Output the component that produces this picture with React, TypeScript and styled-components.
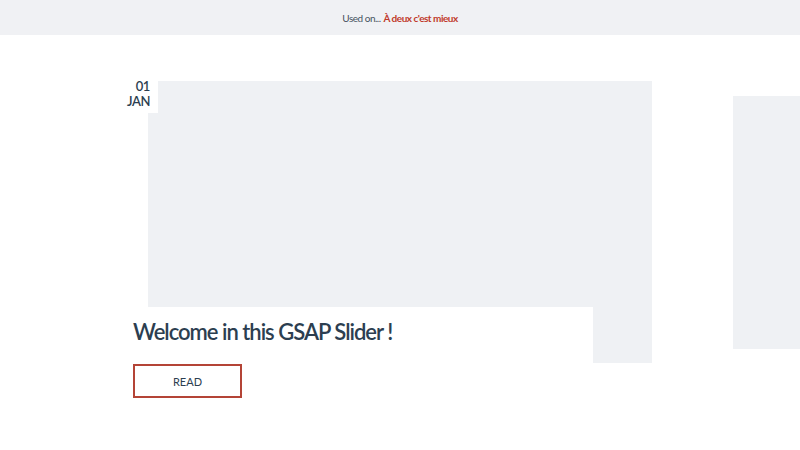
import styled, { createGlobalStyle } from "styled-components";

const GlobalStyle = createGlobalStyle`
  html {
    overflow: hidden;
  }
  body {
    margin: 0;
    padding: 0;
    background: #ffffff;
    font-family: Lato, "Open Sans", sans-serif;
  }
`;

const slides = [
  { day: "01", month: "JAN", title: "Welcome in this GSAP Slider !", active: true },
  { day: "02", month: "JAN", title: "Second slide", active: false },
];

const TopBar = styled.div`
  height: 35px;
  background: #f0f1f4;
  display: flex;
  align-items: center;
  justify-content: center;
  font-size: 10px;
  letter-spacing: -0.5px;
  color: #47535f;
`;

const TopLink = styled.a`
  color: #c0392b;
  font-weight: 700;
  text-decoration: none;
  margin-left: 3px;
`;

const Viewport = styled.div`
  overflow: hidden;
  padding-bottom: 60px;
`;

const Track = styled.div`
  display: flex;
  align-items: center;
  gap: 81px;
  padding: 46px 0 0 148px;
  height: 282px;
`;

const Slide = styled.div<{ $active: boolean }>`
  position: relative;
  flex: 0 0 auto;
  width: ${(p) => (p.$active ? 504 : 453)}px;
  height: ${(p) => (p.$active ? 282 : 253)}px;
`;

const Picture = styled.div`
  width: 100%;
  height: 100%;
  background: #eff1f4;
`;

const DateBadge = styled.div`
  position: absolute;
  left: -30px;
  top: -3px;
  width: 32px;
  height: 34px;
  padding: 1px 8px 0 0;
  box-sizing: content-box;
  display: flex;
  flex-direction: column;
  align-items: flex-end;
  background: #ffffff;
  font-size: 13px;
  font-weight: 600;
  line-height: 15px;
  letter-spacing: -0.4px;
  color: #2c3e50;
`;

const Content = styled.div`
  position: absolute;
  left: -30px;
  top: 226px;
  width: 445px;
  padding: 11px 15px 0;
  background: #ffffff;
`;

const Title = styled.h2`
  margin: 0 0 18px;
  font-size: 22px;
  line-height: 28px;
  font-weight: 600;
  color: #2c3e50;
  letter-spacing: -1px;
`;

const ReadButton = styled.button`
  display: block;
  width: 109px;
  height: 34px;
  border: 2px solid #b44436;
  background: #ffffff;
  font-family: Lato, sans-serif;
  font-size: 11px;
  color: #2c3e50;
  cursor: pointer;
`;

export default function App() {
  return (
    <>
      <GlobalStyle />
      <TopBar>
        Used on...
        <TopLink href="#">À deux c'est mieux</TopLink>
      </TopBar>
      <Viewport>
        <Track>
          {slides.map((s) => (
            <Slide key={s.day} $active={s.active}>
              <Picture />
              {s.active && (
                <>
                  <DateBadge>
                    <span>{s.day}</span>
                    <span>{s.month}</span>
                  </DateBadge>
                  <Content>
                    <Title>{s.title}</Title>
                    <ReadButton>READ</ReadButton>
                  </Content>
                </>
              )}
            </Slide>
          ))}
        </Track>
      </Viewport>
    </>
  );
}
